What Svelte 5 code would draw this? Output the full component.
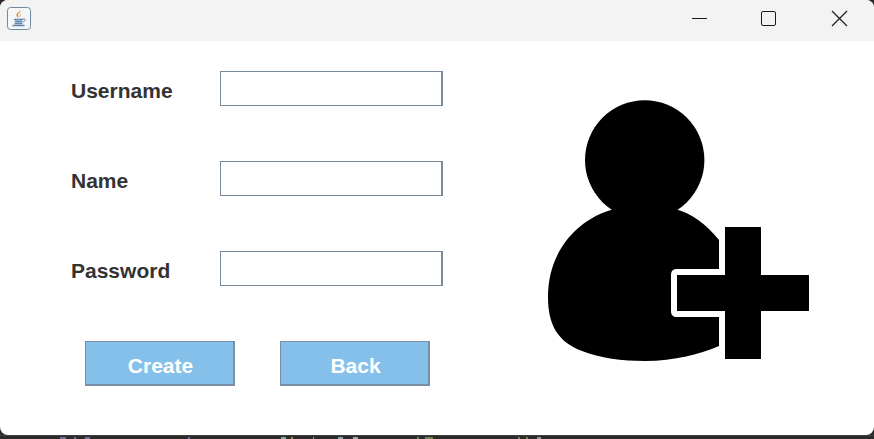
<script>
  const fields = ['Username', 'Name', 'Password'];
  // bits of the code editor showing behind the window
  const behind = [
    [60, 6, '#8f7fb5'], [74, 2, '#8f7fb5'], [85, 5, '#8f7fb5'], [188, 2, '#8f7fb5'],
    [281, 5, '#a8c0d0'], [291, 2, '#d0a050'], [313, 1, '#b0b0b0'], [338, 5, '#a8c0d0'],
    [353, 5, '#c8c8c8'], [417, 2, '#7fa060'], [425, 8, '#7fa060'], [518, 2, '#7fa060'],
    [526, 2, '#7fa060'], [537, 4, '#b0b0b0']
  ];
</script>

<div class="desktop">
  <div class="window">
    <header class="titlebar">
      <svg class="app-icon" width="24" height="23" viewBox="0 0 24 23" aria-hidden="true">
        <rect x="0.5" y="0.5" width="23" height="22" rx="3" fill="#f4f6f8" stroke="#6f8ba3" />
        <path d="M13.500 3c1 2-3 3-2.500 6 .2 1 .8 1.500 1 2-1.500-.4-3-2-2.500-3.500.5-1.800 3.500-2.500 4-4.500z" fill="#e8832a" />
        <path d="M15 6.500c-1.500 1-2.500 2-1.500 4-1.500-1-1.800-2.800 1.500-4z" fill="#e8832a" />
        <path d="M7 12.500h9M8 14.500h7M7.500 16.500h8M5.500 18.500h12" stroke="#5f84aa" stroke-width="1.400" fill="none" />
        <path d="M16 12c3-.5 3 2.500-.5 3" stroke="#5f84aa" fill="none" />
      </svg>
      <div class="controls">
        <button aria-label="Minimize"><span class="min"></span></button>
        <button aria-label="Maximize"><span class="max"></span></button>
        <button aria-label="Close">
          <svg width="17" height="17" viewBox="0 0 17 17"><path d="M1 1l15 15M16 1L1 16" stroke="#1a1a1a" stroke-width="1.200" fill="none" /></svg>
        </button>
      </div>
    </header>

    <main class="content">
      <section class="form">
        {#each fields as field}
          <label class="row">
            <span>{field}</span>
            <input type={field === 'Password' ? 'password' : 'text'} />
          </label>
        {/each}
        <div class="actions">
          <button class="action">Create</button>
          <button class="action">Back</button>
        </div>
      </section>

      <svg class="avatar" width="262" height="262" viewBox="548 100 262 262" aria-label="Add user">
        <circle cx="644.700" cy="160" r="59.700" />
        <path d="M617 208.500C585 215 548 245 548 297C548 325 558 342 582 351C600 358 622 361 645 361C675 361 700 354 719 346V317H677C673 317 671 315 671 311V275C671 271 673 269 677 269H719V240C706 224 692 213 673 208.500Z" />
        <path d="M725 227H761V275H809V311H761V359H725V311H677V275H725Z" />
      </svg>
    </main>
  </div>
  <svg class="behind" width="874" height="4" viewBox="0 0 874 4" aria-hidden="true">
    <rect width="874" height="1" fill="#3f3f3f" />
    {#each behind as [x, w, c]}
      <rect {x} y="2" width={w} height="2" fill={c} opacity="0.8" />
    {/each}
  </svg>
</div>

<style>
  :global(body) { margin: 0; background: #2b2b2b; }
  .desktop { width: 874px; height: 439px; overflow: hidden; background: #2b2b2b; }
  .window { height: 435px; overflow: hidden; border-radius: 8px; background: #fff; }
  .titlebar { display: flex; align-items: flex-start; justify-content: space-between; height: 41px; box-sizing: border-box; padding: 7px 0 0 7px; background: #f3f3f3; }
  .app-icon { display: block; }
  .controls { display: flex; margin-top: -7px; }
  .controls button { display: flex; align-items: center; justify-content: center; width: 70px; height: 37px; padding: 0; border: 0; background: none; }
  .min { display: block; width: 15px; height: 1px; background: #1a1a1a; }
  .max { display: block; width: 13px; height: 13px; margin-right: 1px; border: 1.5px solid #1a1a1a; border-radius: 2px; }
  .content { display: flex; justify-content: space-between; height: 394px; box-sizing: border-box; padding: 30px 64px 0 71px; font: bold 21px "Liberation Sans", Arial, sans-serif; color: #333; }
  .form { display: flex; flex-direction: column; gap: 55px; width: 372px; }
  .row { display: flex; align-items: center; height: 35px; }
  .row span { width: 149px; padding-top: 4px; }
  input { width: 223px; height: 35px; box-sizing: border-box; border: solid #7a8a9a; border-width: 1px 2px 1px 1px; background: #fff; outline: none; }
  .actions { display: flex; gap: 45px; margin-left: 14px; }
  .action { width: 150px; height: 45px; box-sizing: border-box; padding: 5px 0 0 2px; border: solid #7a8fa6; border-width: 1px 2px 2px 1px; background: #85c0ea; color: #fff; font: inherit; }
  .avatar { display: block; margin-top: 29px; }
  .behind { display: block; }
</style>
